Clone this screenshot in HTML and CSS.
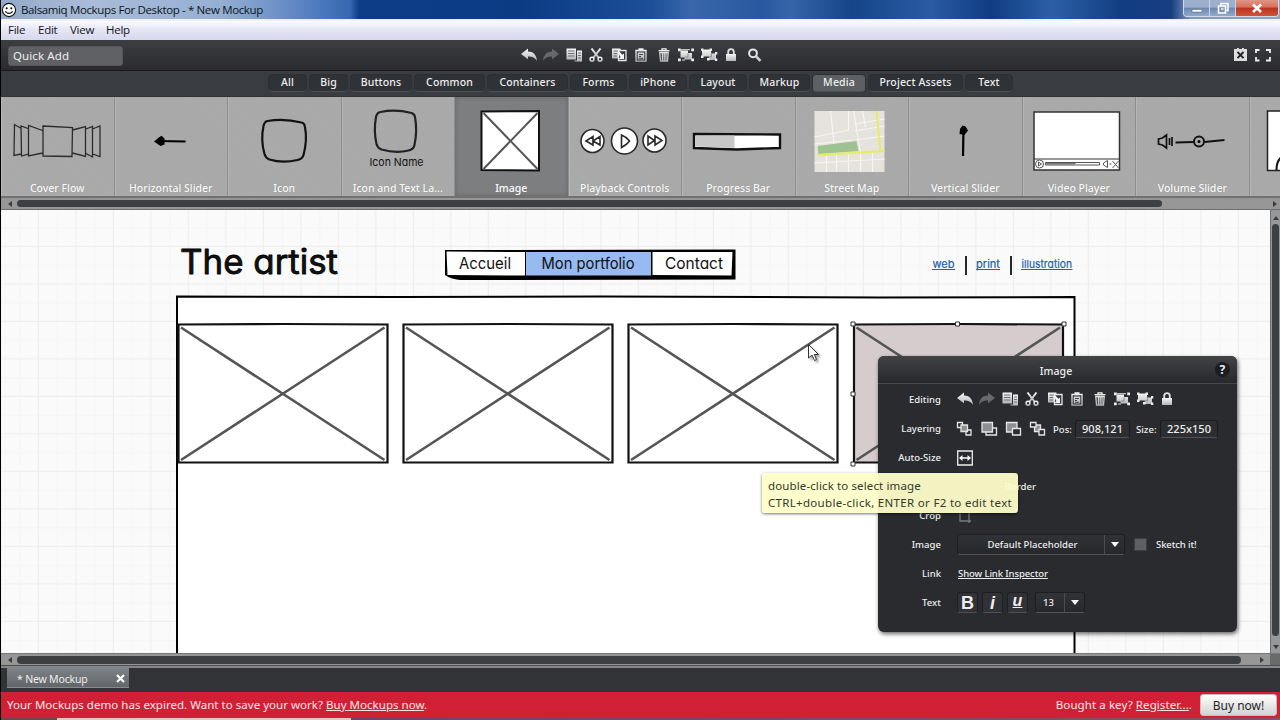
FILE: index.html
```html
<!DOCTYPE html>
<html lang="en">
<head>
<meta charset="utf-8">
<title>Balsamiq Mockups For Desktop - * New Mockup</title>
<link rel="stylesheet" href="styles.css">
</head>
<body>
<svg class="defs" width="0" height="0" aria-hidden="true">
  <defs>
    <linearGradient id="metal" x1="0" y1="0" x2="0" y2="1"><stop offset="0" stop-color="#f6f6f6"/><stop offset="1" stop-color="#b4b5b7"/></linearGradient>
    <symbol id="i-undo" viewBox="0 0 18 18"><path fill="url(#metal)" d="M1 8 8 2.600V5.500C13 5.600 16.500 8.500 17 15 14.500 11.300 12 10.400 8 10.500V13.300Z"/></symbol>
    <symbol id="i-redo" viewBox="0 0 18 18"><path fill="#66686b" d="M17 8 10 2.600V5.500C5 5.600 1.500 8.500 1 15 3.500 11.300 6 10.400 10 10.500V13.300Z"/></symbol>
    <symbol id="i-copy" viewBox="0 0 18 18"><path fill="url(#metal)" d="M1.500 2.500H11V13.500H1.500Z"/><path stroke="#6b6d70" d="M3 5H9.500M3 7.500H9.500M3 10H9.500"/><path fill="url(#metal)" d="M12 4.500H17V15.500H9.500V14.500H12Z"/><path stroke="#6b6d70" d="M13 7H16M13 9.500H16M13 12H16"/></symbol>
    <symbol id="i-cut" viewBox="0 0 18 18"><g fill="none" stroke="url(#metal)"><path stroke-width="2" d="M4.500 2.500 11.800 12M13.500 2.500 6.200 12"/><circle cx="5" cy="13.200" r="1.900" stroke-width="1.600"/><circle cx="13" cy="13.200" r="1.900" stroke-width="1.600"/></g></symbol>
    <symbol id="i-dup" viewBox="0 0 18 18"><path fill="url(#metal)" d="M2 2.500H10.500V12.500H2Z"/><path stroke="#6b6d70" fill="none" d="M3.500 5H8M3.500 7.500H7M3.500 10H7"/><path fill="#34363a" stroke="#e8e8e8" stroke-width="1.300" d="M8.500 4.500H16V14.500H8.500Z"/><path fill="#f4f4f4" d="M7.500 6 9 5 12.300 8.800 14 7.500V13H8.800L10.500 11Z"/></symbol>
    <symbol id="i-paste" viewBox="0 0 18 18"><path fill="none" stroke="url(#metal)" stroke-width="1.300" d="M4 4.500H14V15.200H4Z"/><path fill="url(#metal)" d="M6.500 2.200H11.500V5.300H6.500ZM5.700 6.500H12.300V13.600H5.700Z"/><path stroke="#3d3f42" d="M7 8.500H11M7 10.500H9M7 12.300H11"/></symbol>
    <symbol id="i-trash" viewBox="0 0 18 18"><path fill="none" stroke="url(#metal)" stroke-width="1.300" d="M3.500 4.700H14.500M7 4V2.800H11V4M4.800 6.500 5.500 15.200H12.500L13.200 6.500ZM7.400 7V14.500M9.200 7V14.500M11 7V14.500"/></symbol>
    <symbol id="i-group" viewBox="0 0 18 18"><path fill="url(#metal)" d="M3.500 4.500H11V7H15V13.500H7.500V11.500H3.500Z"/><g fill="#ececec"><path d="M1 2.500H3.800V5.200H1ZM14.200 2.500H17V5.200H14.200ZM1 12.500H3.800V15.300H1ZM14.200 12.500H17V15.300H14.200Z"/></g><path stroke="#ddd" d="M4 3.700H13M5 14H8"/><path stroke="#8a8c8f" d="M11 7.300V11H8" fill="none"/></symbol>
    <symbol id="i-ungroup" viewBox="0 0 18 18"><path fill="url(#metal)" d="M2 3.500H11V10.500H2ZM9 7.500H16V14H9Z"/><path fill="#eee" d="M1 2.500H3.500V5H1ZM9.500 2.500H12V5H9.500ZM1 9.500H3.500V12H1ZM15 6H17.300V8.500H15ZM7 12H9.500V14.500H7ZM15 12.600H17.300V15H15Z"/><path stroke="#8a8c8f" fill="none" d="M11.400 6.500V10.900H8"/></symbol>
    <symbol id="i-lock" viewBox="0 0 18 18"><path fill="url(#metal)" d="M4 8H14V15H4Z"/><path fill="none" stroke="#dedede" stroke-width="1.900" d="M6.200 8V6C6.200 2.200 11.800 2.200 11.800 6V8"/></symbol>
    <symbol id="i-find" viewBox="0 0 18 18"><circle cx="8" cy="7.300" r="3.900" fill="none" stroke="#e5e5e5" stroke-width="2"/><path stroke="#d2d2d2" stroke-width="2.600" d="M11 10.300 15.500 14.800"/></symbol>
  </defs>
</svg>

<div class="window">
  <header class="titlebar">
    <svg class="smiley" width="16" height="16" viewBox="0 0 16 16"><circle cx="8" cy="8" r="6.600" fill="#fff" stroke="#111" stroke-width="1.100"/><circle cx="5.700" cy="6.300" r="1" /><circle cx="10.300" cy="6.300" r="1"/><path d="M4.300 9.300Q8 13.500 11.700 9.300" fill="none" stroke="#111" stroke-width="1.200"/></svg>
    <span class="title">Balsamiq Mockups For Desktop - * New Mockup</span>
    <div class="winbtns">
      <span class="wb"><svg width="12" height="12"><path d="M1 7.500H11V10H1Z" fill="#fff" stroke="#4a5878" stroke-width=".5"/></svg></span>
      <span class="wb"><svg width="12" height="12" fill="none" stroke="#fff" stroke-width="1.600"><path d="M1.500 4H8.500V11H1.500ZM4 3.500V1.500H11V8.500H9"/><path d="M4 7H6.500"/></svg></span>
      <span class="wb close"><svg width="12" height="12"><path d="M2 2.500 10 10M10 2.500 2 10" stroke="#fff" stroke-width="2.600"/></svg></span>
    </div>
  </header>
  <nav class="menubar"><span class="m-file">File</span><span class="m-edit">Edit</span><span class="m-view">View</span><span>Help</span></nav>

  <div class="toolbar">
    <div class="quick">Quick Add</div>
    <div class="icons">
      <svg><use href="#i-undo"/></svg><svg><use href="#i-redo"/></svg><svg><use href="#i-copy"/></svg><svg><use href="#i-cut"/></svg><svg><use href="#i-dup"/></svg><svg><use href="#i-paste"/></svg><svg><use href="#i-trash"/></svg><svg><use href="#i-group"/></svg><svg><use href="#i-ungroup"/></svg><svg><use href="#i-lock"/></svg><svg><use href="#i-find"/></svg>
    </div>
    <svg class="viewicons" width="40" height="18"><path fill="#dedede" d="M1 3H4V2H6V3H9V2H11V3H14V15H1Z"/><path stroke="#222" stroke-width="1.800" d="M4.500 6 10.500 12.200M10.500 6 4.500 12.200"/><path fill="none" stroke="#eee" stroke-width="1.800" d="M23 7V4H26.500M33 4H37V7M37 11V14.500H33M26.500 14.500H23V11"/></svg>
  </div>

  <div class="categories">
    <span>All</span><span>Big</span><span>Buttons</span><span>Common</span><span>Containers</span><span>Forms</span><span>iPhone</span><span>Layout</span><span>Markup</span><span class="active">Media</span><span>Project Assets</span><span>Text</span>
  </div>

  <div class="library">
    <div class="item"><svg viewBox="0 0 113 84"><g fill="none" stroke="#2b2b2b" stroke-width="1.300"><path d="M41.500 29 71 30.500 70.500 59.500 41.500 59ZM41 33.500 27 28.500V59L41 56M27 57 20 59 19.500 29 26.500 31.500M19.500 57 12.500 58.500 13 27.500 19 31M71 33 84 29.500V59.500L71 56M84.500 32 91 29.500V60L84.500 56.500M91 32 98.500 29V59.500L91 57"/></g></svg><b>Cover Flow</b></div>
    <div class="item"><svg viewBox="0 0 113 84"><path d="M43 44 71 44.500" stroke="#000" stroke-width="2.200"/><path d="M39.500 44.500 45 40 47 38.800 50 41.500V47.500L46 49Z"/></svg><b>Horizontal Slider</b></div>
    <div class="item"><svg viewBox="0 0 113 84"><path d="M39 24Q55 21 73 25.500 76 26 76.500 30 79 43 75 58 74 62 69 63 54 66.500 41 62.500 37 61 36 57 32 43 35 29 36 24.500 39 24Z" fill="none" stroke="#111" stroke-width="2.200"/></svg><b>Icon</b></div>
    <div class="item"><svg viewBox="0 0 113 84"><path d="M39 15Q54 12 70 16 73 17 73.500 20 76 34 73 48 72 52.500 67 53.500 54 56.500 40 52.500 36 51 35 47 32 34 34.500 20 35.500 15.500 39 15Z" fill="none" stroke="#222" stroke-width="2.200"/><text x="28" y="69" class="sketch" font-size="11" textLength="54" lengthAdjust="spacingAndGlyphs">Icon Name</text></svg><b>Icon and Text La...</b></div>
    <div class="item selected"><svg viewBox="0 0 113 84"><path d="M26 14.500 83.500 14V73.500L26 73Z" fill="#fff" stroke="#111" stroke-width="2"/><path d="M28 16 82 72M82 16 28 72" stroke="#555" stroke-width="2"/></svg><b>Image</b></div>
    <div class="item"><svg viewBox="0 0 113 84"><g fill="#fff" stroke="#2a2a2a" stroke-width="1.600"><circle cx="24" cy="44" r="11.500"/><circle cx="56" cy="44" r="13"/><circle cx="86" cy="43.500" r="11.500"/><path d="M53 38V50.500Q59 47 61 44 58 40 53 38ZM24.500 39.500V48L17.500 44ZM31.500 39.500V48L24.500 44ZM79.500 39V48L86 43.500ZM86.500 39V48L93.500 43.500Z"/></g></svg><b>Playback Controls</b></div>
    <div class="item"><svg viewBox="0 0 113 84"><path d="M11.500 37 97.500 37.500V51L54 52.500 11.500 51Z" fill="#fff" stroke="#111" stroke-width="2.400"/><path d="M13 38.500H52V51L13 49.500Z" fill="#c8c8c8"/></svg><b>Progress Bar</b></div>
    <div class="item"><svg viewBox="0 0 113 84"><g transform="translate(19 14)"><path d="M0 0H70V61H0Z" fill="#e6e2dc"/><path stroke="#f7f5f2" stroke-width="1.200" fill="none" d="M0 26 34 19 34 0M16 0 20 36M39 0 46 41M0 33 38 29M40 13 70 8M40 20 70 15M42 29 70 25M48 0 51 16M12 43V61M22 43V61M34 42V61M46 41V61M58 40V61M0 52 70 48"/><path fill="#9fc390" d="M3 35 42 30 44 40 4 43Z"/><path d="M4 44 70 40M62 0 66 40" fill="none" stroke="#e5ed61" stroke-width="2"/></g></svg><b>Street Map</b></div>
    <div class="item"><svg viewBox="0 0 113 84"><path d="M54 32 53.500 59" stroke="#000" stroke-width="2.200"/><path d="M50.500 32 53 28.500 56 29.500 58.500 33.500 55 38 50 37Z"/></svg><b>Vertical Slider</b></div>
    <div class="item"><svg viewBox="0 0 113 84"><g transform="translate(-1 0)"><path d="M12.500 15H98V73H12.500Z" fill="#fff" stroke="#333" stroke-width="1.500"/><path d="M12.500 62H98" stroke="#333"/><g fill="none" stroke="#555"><circle cx="18" cy="67" r="4"/><path d="M17 65V69L20 67ZM24 65.500H78V68H24ZM82 66 86 63.500V70.500L82 68ZM88 67H90M91 64 97 71M97 64 91 71"/></g><path d="M24 66H54V67.500H24Z" fill="#777"/></g></svg><b>Video Player</b></div>
    <div class="item"><svg viewBox="0 0 113 84"><path d="M22 42 26 41 30 38V51L26 48 22 47ZM33 41V48M35.500 40V49" fill="none" stroke="#111" stroke-width="1.700"/><path d="M39 45.500 57 45M68 45 88 43" stroke="#111" stroke-width="2.200"/><circle cx="62.500" cy="44.500" r="5" fill="none" stroke="#111" stroke-width="2"/><circle cx="62.500" cy="44.500" r="1.500"/></svg><b>Volume Slider</b></div>
    <div class="item cut"><svg viewBox="0 0 113 84"><path d="M18 14H100V73.500H18Z" fill="#fff" stroke="#222" stroke-width="1.500"/><path d="M27 73Q27 65 31 61" fill="none" stroke="#111" stroke-width="2"/></svg></div>
  </div>
  <div class="hscroll libscroll"><i class="tri left"></i><i class="thumb"></i><i class="tri right"></i></div>

  <main class="stage">
    <svg class="canvas" viewBox="1 210 1269 444" width="1269" height="444">
      <defs>
        <pattern id="grid" x="1.500" y="209.500" width="37.500" height="37.500" patternUnits="userSpaceOnUse"><path d="M18.500 0V37.500M0 18.500H37.500" stroke="#f5f5f6" fill="none"/><path d="M37 0V37.500M0 37H37.500" stroke="#efeff0" stroke-width="1.500" fill="none"/></pattern>
        <g id="placeholder"><path d="M0 .5 105 0 209 .5V138.500H0Z" stroke="#111" stroke-width="2.200"/><path d="M2.500 3.500 206 136M206 3.500 2.500 136" stroke="#555" stroke-width="2.600"/></g>
      </defs>
      <path fill="#fafafb" d="M0 210H1270V654H0Z"/><path fill="url(#grid)" d="M0 210H1270V654H0Z"/>
      <text class="sketch" x="180" y="274" font-size="34" textLength="158" lengthAdjust="spacingAndGlyphs" stroke="#000" stroke-width=".8" stroke-linejoin="round">The artist</text>
      <path d="M445 250 735.500 249.500V279.500L460 280Q450 279 445 275Z"/>
      <path fill="#fff" d="M446.500 251.500 525 252V275.500L447.500 275ZM652.500 252H732.500L731.500 275.500 652.500 275Z"/><path fill="#97baf1" d="M526 252H651V275.500H526Z"/>
      <g class="sketch" font-size="16.500"><text x="459" y="269" textLength="52" lengthAdjust="spacingAndGlyphs">Accueil</text><text x="541.500" y="269" textLength="93" lengthAdjust="spacingAndGlyphs">Mon portfolio</text><text x="665" y="269" textLength="58" lengthAdjust="spacingAndGlyphs">Contact</text></g>
      <g class="sketch link" font-size="11" stroke="#2162ac" stroke-width=".2"><text x="932.500" y="268" textLength="22" lengthAdjust="spacingAndGlyphs">web</text><text x="976" y="268" textLength="24" lengthAdjust="spacingAndGlyphs">print</text><text x="1021.500" y="268" textLength="50.500" lengthAdjust="spacingAndGlyphs">illustration</text></g>
      <path stroke="#2162ac" d="M932 269.500H955M976 269.500H1000M1021 269.500H1072.500"/>
      <path d="M966 256V275M1011 256V275" stroke="#111" stroke-width="1.800"/>
      <path d="M177 660V296.500L400 297 600 296.500 880 297.500 1074.500 297V660" fill="#fff" stroke="#000" stroke-width="2"/>
      <use href="#placeholder" x="178.500" y="324" fill="#fff"/><use href="#placeholder" x="403.500" y="324" fill="#fff"/><use href="#placeholder" x="628.500" y="324" fill="#fff"/><use href="#placeholder" x="854" y="324" fill="#d6cccd"/>
      <g fill="#fff" stroke="#333"><path d="M851 322H855V326H851ZM955.500 322H959.500V326H955.500ZM1062 322H1066V326H1062ZM851 392H855V396H851ZM851 462H855V466H851Z"/></g>
    </svg>
    <div class="vscroll"><i class="tri up"></i><i class="vthumb"></i><i class="tri down"></i></div>
  </main>
  <div class="hscroll canvascroll"><i class="tri left"></i><i class="thumb"></i><i class="tri right"></i><i class="corner"></i></div>

  <div class="tabs"><div class="tab"><span>* New Mockup</span><svg width="9" height="9"><path d="M1 1 8 8M8 1 1 8" stroke="#fff" stroke-width="2.200"/></svg></div></div>
  <footer class="notice">
    <span class="msg">Your Mockups demo has expired. Want to save your work? <u>Buy Mockups now</u>.</span>
    <span class="key">Bought a key? <u>Register...</u>.</span>
    <button class="buy">Buy now!</button>
  </footer>
  <div class="strip"></div>
</div>

<section class="inspector">
  <header class="ihead"><span>Image</span><b>?</b></header>
  <div class="row first"><label>Editing</label><div class="icons">
    <svg><use href="#i-undo"/></svg><svg><use href="#i-redo"/></svg><svg><use href="#i-copy"/></svg><svg><use href="#i-cut"/></svg><svg><use href="#i-dup"/></svg><svg><use href="#i-paste"/></svg><svg><use href="#i-trash"/></svg><svg><use href="#i-group"/></svg><svg><use href="#i-ungroup"/></svg><svg><use href="#i-lock"/></svg></div></div>
  <div class="row"><label>Layering</label>
    <svg class="layers" width="90" height="18" fill="none" stroke="#e5e5e5" stroke-width="1.300"><path d="M1.500 2.500H6.500V7.500H1.500ZM10 10H15V15H10Z"/><path fill="#8d8f92" d="M5 5H11.500V11.500H5Z"/><path d="M30 8H40.500V15H30Z"/><path fill="#8d8f92" d="M26 2.500H36.500V12H26Z"/><path fill="#8d8f92" d="M50.500 2.500H61V12H50.500Z"/><path fill="#292b2e" d="M56.500 8.500H64.500V15H56.500Z"/><path fill="#8d8f92" d="M78.500 5H84.500V11.500H78.500Z"/><path fill="#292b2e" d="M74.500 2.500H80V7H74.500ZM83 9.500H88.500V15H83Z"/></svg>
    <span class="pos">Pos:</span><span class="field f1">908,121</span><span class="size">Size:</span><span class="field f2">225x150</span></div>
  <div class="row"><label>Auto-Size</label><svg width="16" height="16"><path fill="none" stroke="#eee" stroke-width="1.300" d="M.700 1H15.300V15H.700Z"/><path stroke="#fff" stroke-width="1.500" d="M3 8H13"/><path fill="#fff" d="M2 8 5.500 5V11ZM14 8 10.500 5V11Z"/></svg></div>
  <div class="row"><label></label><span class="border">Border</span></div>
  <div class="row"><label>Crop</label><svg width="16" height="16"><path fill="none" stroke="#77797c" stroke-width="1.300" d="M3 1V13H14M1 4H12V15"/></svg></div>
  <div class="row"><label>Image</label><div class="select wide"><span>Default Placeholder</span><i></i></div><i class="check"></i><span class="sk">Sketch it!</span></div>
  <div class="row"><label>Link</label><u class="showlink">Show Link Inspector</u></div>
  <div class="row"><label>Text</label><div class="fmt"><b>B</b><b class="it">i</b><b class="un">u</b></div><div class="select small"><span>13</span><i></i></div></div>
</section>
<div class="tooltip">double-click to select image<br><span>CTRL+double-click, ENTER or F2 to edit text</span></div>
<svg class="cursor" width="16" height="20" viewBox="0 0 16 20"><path d="M1.500 1.500V15L5 12 7.500 17.500 9.500 16.500 7.300 11.500H11.500Z" fill="#fff" stroke="#333"/></svg>
</body>
</html>
```
FILE: styles.css
```css
* { box-sizing: border-box; }
body { margin: 0; width: 1280px; height: 720px; overflow: hidden; position: relative; background: #000; font-family: "Noto Sans", "Open Sans", sans-serif; font-size: 11px; color: #eee; }
.defs { position: absolute; }
.window { display: flex; flex-direction: column; width: 1280px; height: 720px; padding-left: 1px; }
.sketch { font-family: Inter, "Liberation Sans", sans-serif; font-feature-settings: "cv11"; fill: #111; }
.link { fill: #2162ac; }

.titlebar { height: 21px; display: flex; align-items: flex-start; background: linear-gradient(90deg, #93a9c9 0, #a9bcd8 90px, #95afd3 220px, #6f93c9 275px, #4b78bd 320px, #3767b0 349px, #0c3d86 358px, #0b3b83 520px, #1b4f98 650px, #3a67ab 690px, #2958a0 760px, #3665a9 790px, #154489 850px, #2a5ba3 930px, #103c83 990px, #2c60a6 1050px, #123d83 1120px, #173e80 1170px, #8098bd 1190px, #90a5c4 1279px); border-bottom: 2px solid #f1f1f5; color: #0c1420; }
.smiley { margin: 2px 4px 0 0; }
.title { font: 11.500px/20px "Open Sans", "Noto Sans", sans-serif; letter-spacing: -.36px; }
.winbtns { margin-left: auto; margin-right: 1px; display: flex; height: 17px; border: 1px solid #d0d9e8; border-top: 0; border-radius: 0 0 4px 4px; overflow: hidden; }
.wb { width: 26px; display: flex; justify-content: center; align-items: center; background: linear-gradient(#9cb0ce 45%, #6b86b0 50%, #91aacb); border-right: 1px solid #cad5e5; }
.wb.close { width: 42px; border: 0; background: linear-gradient(#df9585, #d4705c 45%, #bb3421 50%, #d05338); }
.menubar { height: 19px; display: flex; align-items: center; padding-left: 7px; background: linear-gradient(#fafaff, #e3e4f4 50%, #d7d9ec); color: #15151c; font: 11.500px/18px "Open Sans", sans-serif; letter-spacing: -.25px; }
.menubar span { margin-top: -2px; }
.m-file { width: 30px; } .m-edit { width: 32px; } .m-view { width: 36px; }

.toolbar { height: 31px; display: grid; grid-template-columns: 511px 1fr 47px; align-items: center; background: linear-gradient(#3c3e42, #292b2e); border-bottom: 1px solid #16181b; }
.quick { width: 115px; height: 20px; margin: 1px 0 0 7px; padding-left: 4px; border-radius: 3px; background: #5f6164; border: 1px solid #54565a; font-size: 11.500px; line-height: 18px; letter-spacing: .1px; }
.icons { display: flex; gap: 4.500px; margin-left: 7.500px; }
.icons svg { width: 18px; height: 18px; flex: none; }
.viewicons { margin-top: -1px; }
.categories { height: 26px; display: grid; grid-template-columns: 37px 37px 60px 69px 79px 55px 56px 56px 59px 52px 93px 46px; gap: 4px; padding: 4px 0 5px 268px; background: #393c40; border-bottom: 1px solid #303236; font-size: 10.500px; }
.categories span { line-height: 15px; text-align: center; background: #2f3236; border-radius: 3px; box-shadow: 0 1px 0 #4d5054, 0 0 0 .5px #222427; white-space: nowrap; font-weight: 500; letter-spacing: .15px; }
.categories .active { background: #5d6063; }

.library { height: 99px; display: grid; grid-template-columns: repeat(12, 113.500px); overflow: hidden; background: repeating-linear-gradient(45deg, #a9a9a9 0 1px, #ababab 1px 2px, #a8a8a8 2px 3px); }
.item { height: 99px; display: flex; flex-direction: column; align-items: center; border-right: 1px solid #8e8e8e; box-shadow: inset 1px 0 0 #b5b5b5; }
.item svg { width: 113px; height: 84px; flex: none; transform: translateX(.5px); }
.item b { font-weight: 500; font-size: 10.500px; line-height: 14px; color: #fafafa; white-space: nowrap; letter-spacing: 0; text-shadow: 0 0 1px #888; }
.selected { background: #7d7e80; box-shadow: inset 0 0 5px #646567; }
.hscroll { display: flex; align-items: center; background: #969696; flex: none; }
.libscroll { height: 14px; border-top: 2px solid #707173; border-bottom: 1px solid #6e6e70; padding: 0 3px 0 7px; }
.thumb { height: 7px; background: #3d4043; border-radius: 4px; width: 1145px; margin-left: 5px; }
.tri { width: 0; height: 0; border: 3.500px solid transparent; }
.tri.left { border-left: 0; border-right: 4px solid #3a3c3f; }
.tri.right { border-right: 0; border-left: 4px solid #3a3c3f; margin-left: auto; }

.stage { display: grid; grid-template-columns: 1269px 10px; height: 443px; overflow: hidden; flex: none; }
.canvas { display: block; }
.vscroll { display: flex; flex-direction: column; align-items: center; background: #969798; padding: 6px 0 5px; border-left: 1px solid #6d6e70; }
.vthumb { width: 7px; height: 412px; background: #3d4043; border-radius: 4px; margin-top: 4px; }
.tri.up { border-top: 0; border-bottom: 4px solid #3a3c3f; flex: none; }
.tri.down { border-bottom: 0; border-top: 4px solid #3a3c3f; margin-top: auto; flex: none; }
.canvascroll { height: 12px; border-top: 1px solid #77787a; padding-left: 7px; }
.canvascroll .thumb { width: 1224px; height: 8px; }
.canvascroll .right { margin-right: 6px; }
.corner { width: 10px; height: 11px; background: #67696b; }
.tabs { height: 27px; flex: none; background: #313337; border-top: 1px solid #4b4d51; padding: 2px 0 0 6px; box-shadow: inset 0 2px 0 #85878b; }
.tab { width: 122px; height: 20px; display: flex; align-items: center; justify-content: space-between; padding: 2px 4px 0 10px; background: linear-gradient(#7e8286, #626569); border-bottom: 1px solid #888b8f; font-size: 10.500px; letter-spacing: -.18px; }
.notice { height: 26px; flex: none; display: flex; align-items: center; background: #d12036; padding: 0 3px 0 6px; font-size: 11.500px; color: #ffe5e7; letter-spacing: .09px; }
.msg, .key { margin-top: -1px; }
.msg { letter-spacing: .03px; }
.key { margin-left: auto; }
.buy { width: 77px; height: 22px; margin-left: 8px; padding: 0; border: 1px solid #cbb; border-radius: 3px; background: linear-gradient(#fff, #d2d2d2); font: 12px "Noto Sans", sans-serif; color: #252525; }
.strip { height: 2px; background: linear-gradient(90deg, #66475c 56px, #e1c5ce 56px 350px, #69466b 350px, #86506d); }

.inspector { position: absolute; left: 878px; top: 356px; width: 359px; height: 276px; border-radius: 6px; background: #292b2e; box-shadow: 1px 2px 4px rgba(0,0,0,.6); font-size: 9.500px; font-weight: 500; letter-spacing: .04px; }
.ihead { height: 28px; display: grid; grid-template-columns: 1fr; align-items: center; text-align: center; background: linear-gradient(#414347, #26282b); border-bottom: 1px solid #45474a; border-radius: 6px 6px 0 0; font-size: 10.500px; }
.ihead span, .ihead b { grid-area: 1 / 1; }
.ihead span { padding-top: 2px; padding-right: 3px; }
.ihead b { justify-self: end; margin-right: 7px; width: 15px; height: 15px; line-height: 15px; border-radius: 50%; background: #1b1d20; font-size: 12px; }
.row { height: 29px; display: flex; align-items: center; white-space: nowrap; }
.row.first { height: 30px; }
.row label { width: 63px; text-align: right; margin-right: 16px; flex: none; }
.row > * { flex: none; }
.row .icons { margin-left: -1.500px; }
.layers { margin-left: -1px; }
.pos { margin-left: 7px; padding-top: 2px; width: 19px; }
.field { height: 18px; line-height: 16px; border: 1px solid #1a1c1f; border-bottom-color: #505256; border-radius: 3px; background: #2c2e32; font-size: 11px; text-align: center; }
.f1 { width: 55px; margin-left: 3px; } .f2 { width: 58px; margin-left: 3px; } .size { margin-left: 6px; padding-top: 2px; width: 21px; }
.border { width: 79px; text-align: right; }
.select { display: flex; background: linear-gradient(#303236, #26282b); border: 1px solid #1c1e20; border-bottom-color: #515357; border-radius: 3px; height: 21px; }
.select span { flex: 1; text-align: center; line-height: 20px; }
.wide span { padding-left: 3px; }
.select i { width: 20px; border-left: 1px solid #4a4c50; display: grid; place-items: center; }
.select i::before { content: ""; border: 4.500px solid transparent; border-top: 5px solid #fff; border-bottom: 0; }
.wide { width: 168px; }
.check { width: 13px; height: 13px; margin-left: 9px; background: #5d5f62; border: 1px solid #3b3d40; }
.sk { margin-left: 9px; letter-spacing: -.1px; }
.showlink { margin-left: 1px; text-underline-offset: 1px; letter-spacing: -.1px; }
.fmt { display: flex; gap: 4px; }
.fmt b { width: 21px; height: 21px; background: #303236; border: 1px solid #1d1f22; border-bottom-color: #4e5054; border-radius: 3px; font: bold 18px/20px "Liberation Sans", sans-serif; text-align: center; }
.fmt .it { font-style: italic; } .fmt .un { font-style: italic; font-size: 16px; line-height: 16px; text-decoration: underline; }
.small { width: 50px; margin-left: 7px; }
.small span { padding-right: 3px; }
.tooltip { position: absolute; left: 762px; top: 473px; width: 256px; height: 40px; padding: 4px 6px; border-radius: 3px; background: rgba(253,254,200,.95); box-shadow: 0 1px 3px rgba(0,0,0,.55); color: #34382e; font-size: 11.500px; line-height: 17px; white-space: nowrap; letter-spacing: .12px; }
.tooltip span { letter-spacing: .31px; }
.cursor { position: absolute; left: 807px; top: 343px; filter: drop-shadow(2px 2px 1px rgba(0,0,0,.35)); }
```
